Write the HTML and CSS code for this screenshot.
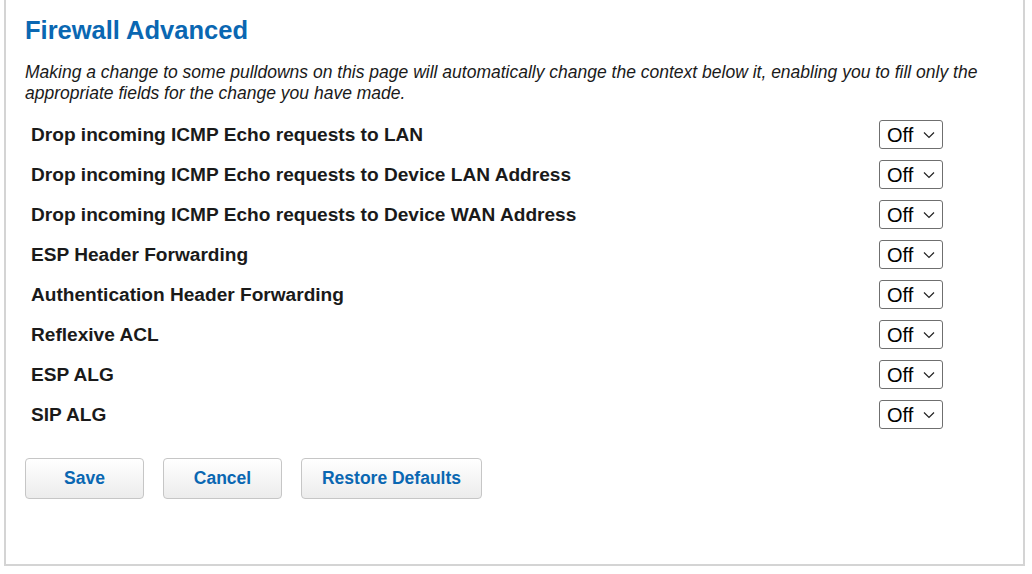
FILE: index.html
```html
<!DOCTYPE html>
<html lang="en">
<head>
    <meta charset="UTF-8">
    <meta name="viewport" content="width=device-width, initial-scale=1.0">
    <title>Firewall Advanced</title>
    <link rel="stylesheet" href="styles.css">
</head>
<body>
    <div class="panel">
        <h1>Firewall Advanced</h1>

        <p class="note">Making a change to some pulldowns on this page will automatically change the context below it, enabling you to fill only the appropriate fields for the change you have made.</p>

        <div class="settings">
            <div class="row">
                <label for="icmpLan">Drop incoming ICMP Echo requests to LAN</label>
                <div class="select-wrap">
                    <select id="icmpLan"><option>Off</option><option>On</option></select>
                    <svg class="chevron" viewBox="0 0 12 8"><path d="M1 1.5l5 5 5-5" /></svg>
                </div>
            </div>
            <div class="row">
                <label for="icmpDevLan">Drop incoming ICMP Echo requests to Device LAN Address</label>
                <div class="select-wrap">
                    <select id="icmpDevLan"><option>Off</option><option>On</option></select>
                    <svg class="chevron" viewBox="0 0 12 8"><path d="M1 1.5l5 5 5-5" /></svg>
                </div>
            </div>
            <div class="row">
                <label for="icmpDevWan">Drop incoming ICMP Echo requests to Device WAN Address</label>
                <div class="select-wrap">
                    <select id="icmpDevWan"><option>Off</option><option>On</option></select>
                    <svg class="chevron" viewBox="0 0 12 8"><path d="M1 1.5l5 5 5-5" /></svg>
                </div>
            </div>
            <div class="row">
                <label for="espFwd">ESP Header Forwarding</label>
                <div class="select-wrap">
                    <select id="espFwd"><option>Off</option><option>On</option></select>
                    <svg class="chevron" viewBox="0 0 12 8"><path d="M1 1.5l5 5 5-5" /></svg>
                </div>
            </div>
            <div class="row">
                <label for="ahFwd">Authentication Header Forwarding</label>
                <div class="select-wrap">
                    <select id="ahFwd"><option>Off</option><option>On</option></select>
                    <svg class="chevron" viewBox="0 0 12 8"><path d="M1 1.5l5 5 5-5" /></svg>
                </div>
            </div>
            <div class="row">
                <label for="reflexAcl">Reflexive ACL</label>
                <div class="select-wrap">
                    <select id="reflexAcl"><option>Off</option><option>On</option></select>
                    <svg class="chevron" viewBox="0 0 12 8"><path d="M1 1.5l5 5 5-5" /></svg>
                </div>
            </div>
            <div class="row">
                <label for="espAlg">ESP ALG</label>
                <div class="select-wrap">
                    <select id="espAlg"><option>Off</option><option>On</option></select>
                    <svg class="chevron" viewBox="0 0 12 8"><path d="M1 1.5l5 5 5-5" /></svg>
                </div>
            </div>
            <div class="row">
                <label for="sipAlg">SIP ALG</label>
                <div class="select-wrap">
                    <select id="sipAlg"><option>Off</option><option>On</option></select>
                    <svg class="chevron" viewBox="0 0 12 8"><path d="M1 1.5l5 5 5-5" /></svg>
                </div>
            </div>
        </div>

        <div class="actions">
            <button class="btn save">Save</button>
            <button class="btn cancel">Cancel</button>
            <button class="btn restore">Restore Defaults</button>
        </div>
    </div>
</body>
</html>
```

FILE: styles.css
```css
* {
    margin: 0;
    padding: 0;
    box-sizing: border-box;
}

body {
    font-family: 'Liberation Sans', Arial, sans-serif;
    background: #ffffff;
    color: #1a1a1a;
}

.panel {
    margin-left: 4px;
    width: 1021px;
    height: 566px;
    border: 2px solid #d4d4d4;
    border-top: none;
    padding: 14px 0 0 19px;
}

h1 {
    color: #0a67b2;
    font-size: 25.5px;
    line-height: 32px;
    font-weight: bold;
}

.note {
    margin-top: 16px;
    width: 990px;
    font-size: 17.5px;
    line-height: 21px;
    font-style: italic;
    color: #1a1a1a;
}

.settings {
    margin-top: 11px;
    width: 918px;
}

.row {
    display: flex;
    justify-content: space-between;
    align-items: center;
    height: 40px;
    padding-left: 6px;
}

.row label {
    font-size: 19.1px;
    font-weight: bold;
    color: #1a1a1a;
}

.select-wrap {
    position: relative;
    width: 64px;
    height: 29px;
    margin-top: -1px;
}

.select-wrap select {
    appearance: none;
    -webkit-appearance: none;
    width: 100%;
    height: 100%;
    border: 1px solid #6f6f6f;
    border-radius: 3px;
    background: #ffffff;
    font-family: 'Liberation Sans', Arial, sans-serif;
    font-size: 20px;
    color: #000000;
    padding: 0 0 0 7px;
}

.chevron {
    position: absolute;
    right: 8px;
    top: 11px;
    width: 12px;
    height: 8px;
    fill: none;
    stroke: #222222;
    stroke-width: 1.2;
    pointer-events: none;
}

.actions {
    display: flex;
    gap: 19px;
    margin-top: 23px;
}

.btn {
    height: 41px;
    width: 119px;
    border: 1px solid #c6c6c6;
    border-radius: 4px;
    background: linear-gradient(#ffffff, #ececec);
    color: #0a67b2;
    font-family: 'Liberation Sans', Arial, sans-serif;
    font-size: 17.5px;
    font-weight: bold;
}

.btn.restore {
    width: 181px;
}
```
